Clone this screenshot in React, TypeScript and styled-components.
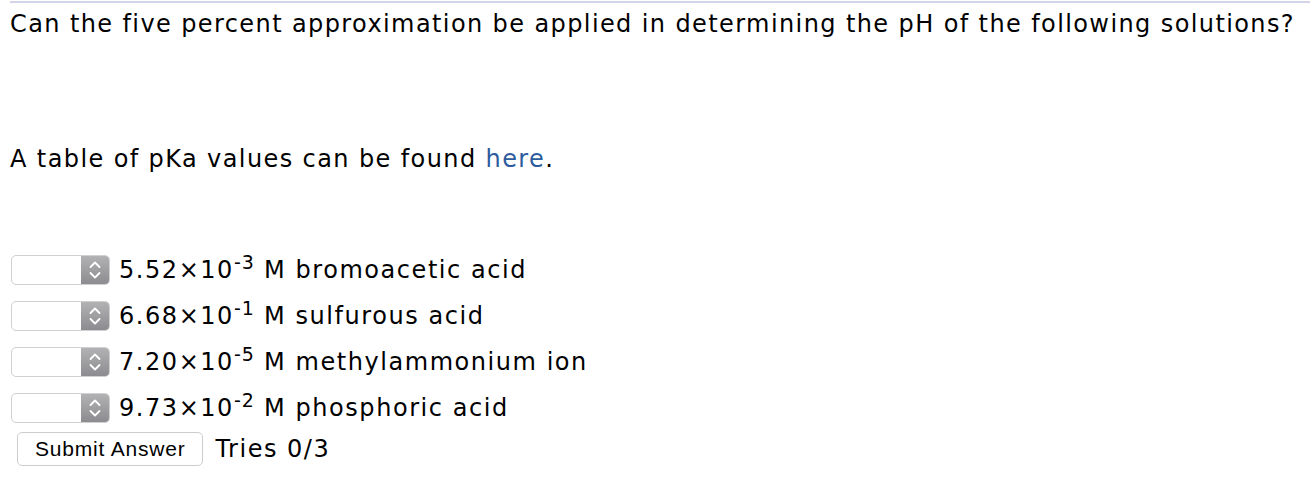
import React from "react";
import styled, { createGlobalStyle } from "styled-components";

const Global = createGlobalStyle`
  html, body { margin: 0; padding: 0; background: #fff; }
  body { font-family: "DejaVu Sans", Verdana, sans-serif; color: #000; }
`;

const Page = styled.div`
  padding: 0 0 0 10px;
`;

const Rule = styled.div`
  height: 2px;
  margin-top: 1px;
  background: #d3d3ea;
`;

const Text = styled.p<{ $top: number }>`
  margin: ${(p) => p.$top}px 0 0 0;
  font-size: 24px;
  letter-spacing: 1.4px;
  line-height: 34px;
  white-space: nowrap;
`;

const Link = styled.a`
  color: #2d5c9e;
  text-decoration: none;
`;

const List = styled.div`
  margin-top: 79px;
  display: flex;
  flex-direction: column;
  gap: 16px;
`;

const Row = styled.div`
  display: flex;
  align-items: center;
  gap: 9px;
  font-size: 24px;
  letter-spacing: 1.55px;
  height: 30px;
`;

const SelectBox = styled.div`
  margin-left: 1px;
  width: 99px;
  height: 30px;
  box-sizing: border-box;
  border: 1px solid #d0d0d0;
  border-radius: 5px;
  display: flex;
  justify-content: flex-end;
  overflow: hidden;
  background: #fff;
`;

const Stepper = styled.div`
  width: 28px;
  height: 100%;
  background: linear-gradient(#b2b2b4, #8c8c90);
  display: flex;
  align-items: center;
  justify-content: center;
`;

const Sup = styled.span`
  font-size: 19px;
  letter-spacing: 1px;
  position: relative;
  top: -9px;
`;

const Label = styled.span`
  white-space: nowrap;
`;

const Footer = styled.div`
  display: flex;
  align-items: center;
  gap: 12px;
  margin-top: 9px;
  margin-left: 7px;
`;

const Button = styled.button`
  font-family: "Liberation Sans", Arial, sans-serif;
  font-size: 21px;
  letter-spacing: 0.8px;
  height: 34px;
  padding: 0 17px;
  background: #fff;
  border: 1px solid #cdcdcd;
  border-radius: 5px;
  color: #000;
`;

const Tries = styled.span`
  font-size: 24px;
  letter-spacing: 1.5px;
`;

const Arrows = () => (
  <svg width="14" height="22" viewBox="0 0 14 22" fill="none" stroke="#fff" strokeWidth="1.8" strokeLinecap="round" strokeLinejoin="round">
    <path d="M2.5 8 L7 3.5 L11.5 8" />
    <path d="M2.5 14 L7 18.5 L11.5 14" />
  </svg>
);

const items = [
  { m: "5.52×10", e: "-3", name: "M bromoacetic acid" },
  { m: "6.68×10", e: "-1", name: "M sulfurous acid" },
  { m: "7.20×10", e: "-5", name: "M methylammonium ion" },
  { m: "9.73×10", e: "-2", name: "M phosphoric acid" },
];

export default function App() {
  return (
    <>
      <Global />
      <Page>
        <Rule />
        <Text $top={4}>Can the five percent approximation be applied in determining the pH of the following solutions?</Text>
        <Text $top={101}>
          A table of pKa values can be found <Link href="#">here</Link>.
        </Text>
        <List>
          {items.map((it) => (
            <Row key={it.e}>
              <SelectBox>
                <Stepper>
                  <Arrows />
                </Stepper>
              </SelectBox>
              <Label>
                {it.m}
                <Sup>{it.e}</Sup> {it.name}
              </Label>
            </Row>
          ))}
        </List>
        <Footer>
          <Button>Submit Answer</Button>
          <Tries>Tries 0/3</Tries>
        </Footer>
      </Page>
    </>
  );
}
